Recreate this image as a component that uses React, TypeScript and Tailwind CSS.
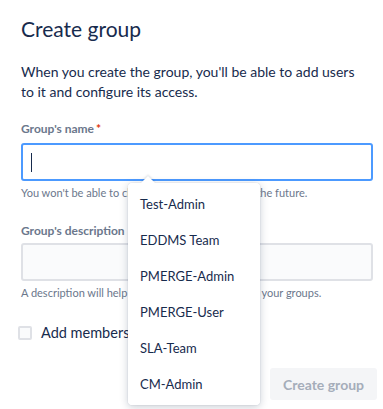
const groups = ["Test-Admin", "EDDMS Team", "PMERGE-Admin", "PMERGE-User", "SLA-Team", "CM-Admin"];

const Label = ({ children, required }: { children: string; required?: boolean }) => {
  return (
    <div className="h-4 text-[12px] font-bold leading-4 text-[#6b778c]">
      {children}
      {required && <span className="ml-[2px] text-[#de350b]">*</span>}
    </div>
  );
};

const Helper = ({ children }: { children: string }) => {
  return <div className="mt-[4px] h-4 text-[11px] leading-4 text-[#6b778c]">{children}</div>;
};

const Suggestions = () => {
  return (
    <div className="absolute left-[128px] top-[183px] w-[132px] rounded-[4px] bg-white shadow-[0_2px_8px_rgba(9,30,66,0.22),0_0_1px_rgba(9,30,66,0.31)]">
      <div className="absolute -top-[5px] left-[15px] h-[10px] w-[10px] rotate-45 bg-white shadow-[-1px_-1px_2px_rgba(9,30,66,0.12)]" />
      <ul className="relative rounded-[4px] bg-white py-[3px]">
        {groups.map((g) => (
          <li key={g} className="h-9 px-3 text-[13px] leading-9 text-[#172b4d]">
            {g}
          </li>
        ))}
      </ul>
    </div>
  );
};

export default function App() {
  return (
    <div
      className="relative h-[409px] w-[383px] overflow-hidden bg-white pl-[21px] pr-[10px] text-[#172b4d]"
      style={{ fontFamily: 'Lato, "Noto Sans", sans-serif' }}
    >
      <h1 className="pt-[17px] text-[21px] leading-6">Create group</h1>

      <p className="mt-[21px] w-[348px] text-[14px] leading-5">
        When you create the group, you'll be able to add users to it and configure its access.
      </p>

      <div className="mt-[19px]">
        <Label required>Group's name</Label>
        <div className="mt-[6px] flex h-[38px] items-center rounded-[3px] border-2 border-[#4c9aff] bg-white px-2">
          <span className="h-[19px] w-px bg-[#172b4d]" />
        </div>
        <Helper>You won't be able to change the group's name in the future.</Helper>
      </div>

      <div className="mt-[22px]">
        <Label>Group's description</Label>
        <div className="mt-[4px] h-[38px] rounded-[3px] border-2 border-[#dfe1e6] bg-[#fafbfc]" />
        <Helper>A description will help admins to find and identify your groups.</Helper>
      </div>

      <label className="-ml-[3px] mt-[22px] flex items-center gap-[9px]">
        <span className="h-[14px] w-[14px] rounded-[2px] border-2 border-[#dfe1e6] bg-[#fafbfc]" />
        <span className="text-[14.5px] leading-5">Add members to this group</span>
      </label>

      <div className="-mr-[4px] mt-[25px] flex justify-end">
        <button className="h-[32px] w-[107px] rounded-[3px] bg-[#f4f5f7] text-[14px] font-bold text-[#a5adba]">
          Create group
        </button>
      </div>

      <Suggestions />
    </div>
  );
}
